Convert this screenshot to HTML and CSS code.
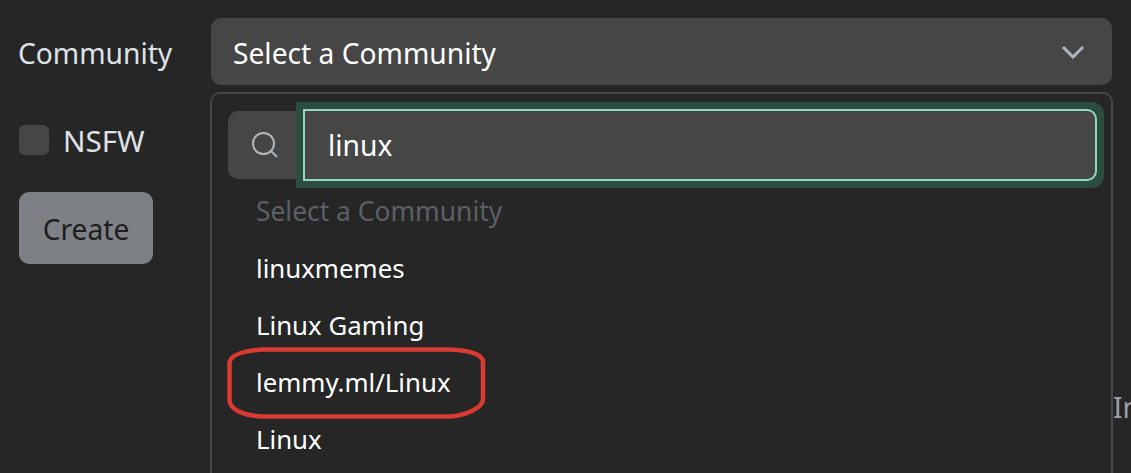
FILE: index.html
```html
<!DOCTYPE html>
<html lang="en">
<head>
    <meta charset="UTF-8">
    <title>Create post</title>
    <link rel="stylesheet" href="styles.css">
</head>
<body>
    <div class="form">
        <div class="side">
            <label class="community-label">Community</label>
            <label class="nsfw"><span class="checkbox"></span>NSFW</label>
            <button class="create">Create</button>
        </div>
        <div class="main">
            <div class="select">
                <span>Select a Community</span>
                <svg class="chevron" width="24" height="14" viewBox="0 0 24 14"><path d="M2 2l10 10L22 2" fill="none" stroke="#adb5bd" stroke-width="3"/></svg>
            </div>
            <span class="behind">In</span>
            <div class="dropdown">
                <div class="search">
                    <span class="search-icon">
                        <svg width="26" height="26" viewBox="0 0 26 26"><circle cx="11.5" cy="11.5" r="10.5" fill="none" stroke="#adb5bd" stroke-width="2"/><path d="M19 19l6 6" fill="none" stroke="#adb5bd" stroke-width="2"/></svg>
                    </span>
                    <div class="search-glow"><div class="search-input">linux</div></div>
                </div>
                <ul class="options">
                    <li class="disabled">Select a Community</li>
                    <li>linuxmemes</li>
                    <li>Linux Gaming</li>
                    <li>lemmy.ml/Linux</li>
                    <li>Linux</li>
                </ul>
            </div>
        </div>
    </div>
    <!-- red marker drawn over the screenshot -->
    <svg class="marker" width="262" height="76" viewBox="0 0 262 76"><path d="M36 4.5H222C240 5 255 8 257 16V54C257 62 242 70 224 71.5H38C20 71 5 66 3.5 56V18C4 10 18 6 36 4.5Z" fill="none" stroke="#d93a32" stroke-width="4.5"/></svg>
</body>
</html>
```

FILE: styles.css
```css
html, body {
    height: 100%;
}
body {
    margin: 0;
    background-color: #262626;
    color: #dee2e6;
    font-family: "Noto Sans", sans-serif;
    font-size: 28.2px;
    overflow: hidden;
    position: relative;
}
.form {
    display: flex;
    padding: 18px 19px 0;
}
.side {
    width: 192px;
    flex-shrink: 0;
    display: flex;
    flex-direction: column;
    align-items: flex-start;
}
.community-label {
    padding-top: 3px;
    line-height: 64px;
    margin-left: -1px;
}
.nsfw {
    display: flex;
    align-items: center;
    gap: 14px;
    margin-top: 40px;
    height: 30px;
    font-size: 29.6px;
}
.checkbox {
    width: 30px;
    height: 30px;
    border-radius: 6px;
    background-color: #464646;
}
.create {
    margin-top: 37px;
    width: 134px;
    height: 72px;
    padding: 2px 0 0;
    border: 0;
    border-radius: 10px;
    background-color: #7d8084;
    color: #1d1d1d;
    font-family: inherit;
    font-size: 28.2px;
}
.main {
    width: 901px;
    position: relative;
}
.select {
    height: 67px;
    box-sizing: border-box;
    display: flex;
    align-items: center;
    justify-content: space-between;
    padding: 3px 27px 0 22px;
    border-radius: 10px;
    background-color: #464646;
    color: #fff;
}
.chevron {
    margin-top: -3px;
}
.behind {
    position: absolute;
    left: 902px;
    top: 370px;
    color: #9a9fa5;
}
.dropdown {
    position: absolute;
    left: -1px;
    right: -1px;
    top: 74px;
    height: 381px;
    box-sizing: border-box;
    padding: 8px 7px 0 16px;
    border: 2px solid #464646;
    border-bottom: 0;
    border-radius: 10px 10px 0 0;
    background-color: #262626;
}
.search {
    display: flex;
    align-items: flex-start;
}
.search-icon {
    width: 68px;
    height: 68px;
    margin-top: 9px;
    flex-shrink: 0;
    display: flex;
    align-items: center;
    justify-content: center;
    padding-left: 6px;
    box-sizing: border-box;
    border-radius: 10px 0 0 10px;
    background-color: #464646;
}
.search-glow {
    flex: 1;
    padding: 7px;
    border-radius: 0 12px 12px 0;
    background-color: #2c4c40;
}
.search-input {
    height: 72px;
    box-sizing: border-box;
    padding-left: 23px;
    line-height: 68px;
    border: 2px solid #8fd9bc;
    border-radius: 0 10px 10px 0;
    background-color: #464646;
    color: #fff;
}
.options {
    list-style-type: none;
    margin: 0;
    padding: 0 0 0 28px;
    color: #fff;
    font-size: 25.8px;
}
.options li {
    height: 57px;
    line-height: 57px;
}
.options .disabled {
    color: #5c6066;
    font-size: 26.4px;
    margin-top: -5px;
}
.marker {
    position: absolute;
    left: 226px;
    top: 345px;
}
```
